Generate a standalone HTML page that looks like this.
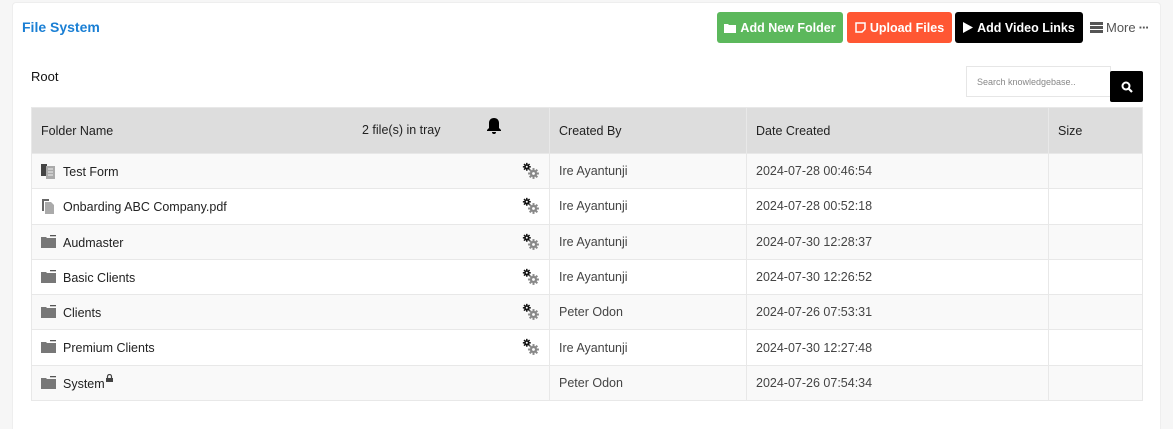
<!DOCTYPE html>
<html><head><meta charset="utf-8"><style>
*{box-sizing:border-box;margin:0;padding:0}
html,body{width:1173px;height:429px;overflow:hidden}
body{background:#f6f6f6;font-family:"Liberation Sans",Arial,sans-serif;position:relative}
.card{position:absolute;left:12px;top:2px;width:1149px;height:440px;background:#fff;border:1px solid #eee;border-radius:4px}
.title{position:absolute;left:22px;top:19px;color:#1a7fd4;font-weight:bold;font-size:14px}
.btn{position:absolute;top:12px;height:31px;border-radius:3px;color:#fff;font-weight:bold;font-size:12.5px;display:flex;align-items:center;justify-content:center;gap:4px}
.more{position:absolute;left:1090px;top:20px;font-size:13px;color:#555;display:flex;align-items:center;gap:3px}
.root{position:absolute;left:31px;top:69px;font-size:13px;color:#111}
.search{position:absolute;left:966px;top:66px;width:145px;height:31px;border:1px solid #e6e6e6;font-size:9px;color:#888;padding:10px 0 0 10px}
.sbtn{position:absolute;left:1110px;top:71px;width:33px;height:31px;background:#000;border-radius:2px;display:flex;align-items:center;justify-content:center}
table{position:absolute;left:31px;top:107px;width:1112px;border-collapse:collapse;font-size:12.5px}
td,th{border:1px solid #e8e8e8;text-align:left;font-weight:normal}
th{background:#ddd;height:46px;padding-left:9px;color:#222;font-size:12.5px}
td{height:35.3px;padding-left:9px;color:#444}
tr:nth-child(odd) td{background:#f9f9f9}
tr:nth-child(even) td{background:#fff}
.nm{position:relative;color:#222}
.nm svg.ic{position:absolute;left:9px;top:10px}
.nm span{position:absolute;left:31px;top:11px}
.gear{position:absolute;left:490px;top:8px}
</style></head><body>
<div class="card"></div>
<div class="title">File System</div>
<div class="btn" style="left:717px;width:126px;background:#5cb85c"><svg width="12" height="10" viewBox="0 0 12 10"><path d="M0 1h4l1 1h7v8H0z" fill="#fff"/></svg>Add New Folder</div>
<div class="btn" style="left:847px;width:105px;background:#ff5733"><svg width="11" height="11" viewBox="0 0 11 11"><path d="M1 1h9v6l-3 3H1z" fill="none" stroke="#fff" stroke-width="1.5"/></svg>Upload Files</div>
<div class="btn" style="left:955px;width:128px;background:#000"><svg width="10" height="11" viewBox="0 0 10 11"><path d="M0 0l10 5.5L0 11z" fill="#fff"/></svg>Add Video Links</div>
<div class="more"><svg width="13" height="11" viewBox="0 0 13 11"><rect y="0" width="13" height="3" fill="#555"/><rect y="4" width="13" height="3" fill="#555"/><rect y="8" width="13" height="3" fill="#555"/></svg>More <b style="letter-spacing:-1px">···</b></div>
<div class="root">Root</div>
<div class="search">Search knowledgebase..</div>
<div class="sbtn"><svg width="12" height="12" viewBox="0 0 12 12"><circle cx="5" cy="5" r="3.5" fill="none" stroke="#fff" stroke-width="2"/><path d="M7.5 7.5l3.5 3.5" stroke="#fff" stroke-width="2.2"/></svg></div>
<table>
<tr><th style="width:518px;position:relative">Folder Name<span style="position:absolute;left:330px;top:15px">2 file(s) in tray</span><svg style="position:absolute;left:454px;top:9px" width="16" height="18" viewBox="0 0 16 18"><path d="M8 1c-3 0-5 2-5 5v5l-2 2v1h14v-1l-2-2V6c0-3-2-5-5-5zM6 15a2 2 0 004 0z" fill="#000"/></svg></th><th style="width:197px">Created By</th><th style="width:302px">Date Created</th><th>Size</th></tr>
</table>
<table style="top:153px">
<tbody id="b"></tbody>
</table>
<script>
var rows=[["f","Test Form","Ire Ayantunji","2024-07-28 00:46:54"],["p","Onbarding ABC Company.pdf","Ire Ayantunji","2024-07-28 00:52:18"],["d","Audmaster","Ire Ayantunji","2024-07-30 12:28:37"],["d","Basic Clients","Ire Ayantunji","2024-07-30 12:26:52"],["d","Clients","Peter Odon","2024-07-26 07:53:31"],["d","Premium Clients","Ire Ayantunji","2024-07-30 12:27:48"],["s","System","Peter Odon","2024-07-26 07:54:34"]];
var ic={f:'<svg class="ic" width="16" height="15" viewBox="0 0 16 15"><rect x="0" y="0" width="6" height="12" fill="#444"/><rect x="5" y="2" width="9" height="13" fill="#aaa"/><path d="M7 5h5M7 8h5M7 11h5" stroke="#eee"/></svg>',
p:'<svg class="ic" width="16" height="15" viewBox="0 0 16 15"><path d="M1 0h7v2H3v10H1z" fill="#666"/><path d="M4 3h6l3 3v9H4z" fill="#aaa"/></svg>',
d:'<svg class="ic" width="16" height="13" viewBox="0 0 16 13"><path d="M0 2h5l1 1h9v10H0z" fill="#777"/><rect x="9" y="0" width="6" height="1.3" fill="#555"/></svg>'};
ic.s=ic.d;
function g(cx,cy,r,t,c){var s='<circle cx="'+cx+'" cy="'+cy+'" r="'+r+'" fill="'+c+'"/>';for(var i=0;i<8;i++){var a=i*Math.PI/4;s+='<rect x="'+(cx-t/2)+'" y="'+(cy-r-t*0.9)+'" width="'+t+'" height="'+(t*1.2)+'" fill="'+c+'" transform="rotate('+(i*45)+' '+cx+' '+cy+')"/>';}return s;}
var gear='<svg class="gear" width="18" height="18" viewBox="0 0 18 18">'+g(4.8,4.8,2.6,1.5,'#111')+'<circle cx="4.8" cy="4.8" r="1" fill="#fff"/>'+g(11.5,11.5,3.6,2,'#888')+'<circle cx="11.5" cy="11.5" r="1.4" fill="#fff"/></svg>';
var lock='<svg style="position:absolute;left:74px;top:8px" width="7" height="8" viewBox="0 0 7 8"><path d="M1.5 4V2.5a2 2 0 014 0V4" fill="none" stroke="#444" stroke-width="1.2"/><rect y="4" width="7" height="4" fill="#444"/></svg>';
var h='';rows.forEach(function(r){h+='<tr><td class="nm" style="width:518px;padding:0">'+ic[r[0]]+'<span>'+r[1]+'</span>'+(r[0]=='s'?lock:gear)+'</td><td style="width:197px">'+r[2]+'</td><td style="width:302px">'+r[3]+'</td><td></td></tr>';});
document.getElementById('b').innerHTML=h;
</script>
</body></html>
